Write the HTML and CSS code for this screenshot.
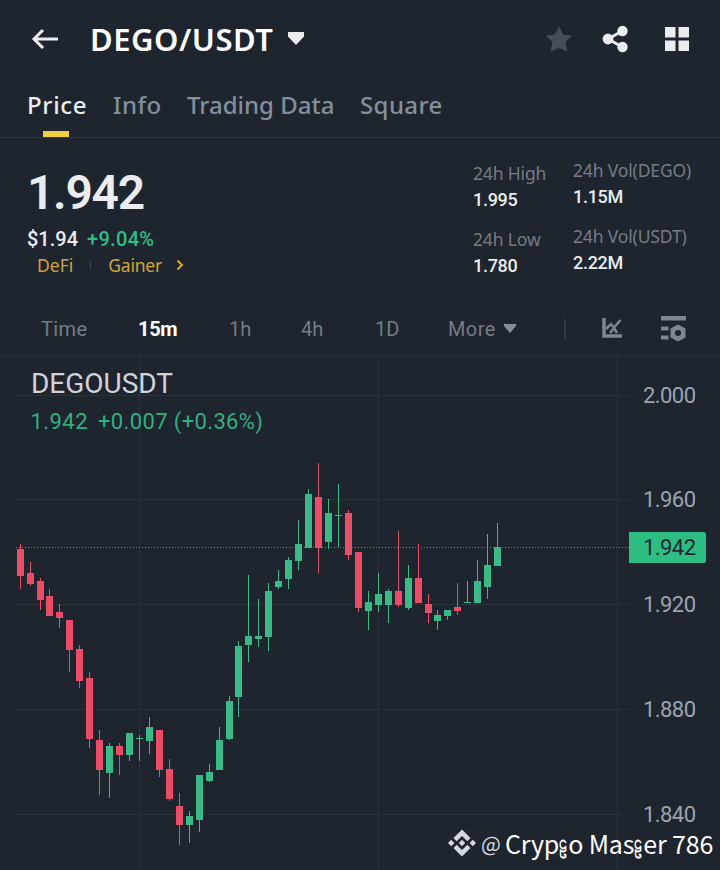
FILE: index.html
```html
<!doctype html>
<html lang="en">
<head>
<meta charset="utf-8">
<title>DEGO/USDT</title>
<link rel="stylesheet" href="styles.css">
</head>
<body>
	<header class="topbar">
		<svg class="back" width="28" height="22" viewBox="0 0 28 22"><path d="M27 11H3M12 2L3 11l9 9" fill="none" stroke="#eaecef" stroke-width="3"/></svg>
		<h1 class="pair">DEGO/USDT</h1>
		<svg class="pairArrow" width="16" height="13" viewBox="0 0 16 13"><path d="M0 0h16v4.500L8 13 0 4.500z" fill="#eaecef"/></svg>
		<div class="actions">
			<svg width="28" height="28" viewBox="0 0 28 28"><path d="M14 2l3.800 8 8.500 1-6.300 6 1.800 8.800-7.800-3.200-7.800 3.200L8 17l-6.300-6 8.500-1z" fill="#474d57" stroke="#474d57" stroke-linejoin="round"/></svg>
			<svg width="26" height="28" viewBox="0 0 26 28"><path d="M20.500 6L6 14l14.500 8" fill="none" stroke="#eaecef" stroke-width="3"/><g fill="#eaecef"><circle cx="20.500" cy="6" r="5.200"/><circle cx="6" cy="14" r="5.400"/><circle cx="20.500" cy="22" r="5.200"/></g></svg>
			<svg width="24" height="24" viewBox="0 0 24 24"><path d="M0 0h10.500v10.500H0zM13.500 0H24v10.500H13.500zM0 13.500h10.500V24H0zM13.500 13.500H24V24H13.500z" fill="#eaecef"/></svg>
		</div>
	</header>

	<nav class="tabs">
		<a class="tab active">Price</a>
		<a class="tab info">Info</a>
		<a class="tab trading">Trading Data</a>
		<a class="tab square">Square</a>
	</nav>

	<section class="summary">
		<div class="quote">
			<div class="last">1.942</div>
			<div class="change"><span class="usd">$1.94</span><span class="up">+9.04%</span></div>
			<div class="tags">
				<span>DeFi</span><i class="tagLine"></i><span class="gainer">Gainer</span>
				<svg width="8" height="12" viewBox="0 0 8 12"><path d="M1.500 1.500L6 6l-4.500 4.500" fill="none" stroke="#d9ab2c" stroke-width="2"/></svg>
			</div>
		</div>
		<dl class="stats range">
			<dt>24h High</dt><dd>1.995</dd>
			<dt>24h Low</dt><dd>1.780</dd>
		</dl>
		<dl class="stats volume">
			<dt>24h Vol(DEGO)</dt><dd>1.15M</dd>
			<dt>24h Vol(USDT)</dt><dd>2.22M</dd>
		</dl>
	</section>

	<div class="intervals">
		<span class="iTime">Time</span>
		<span class="i15 active">15m</span>
		<span class="i1h">1h</span>
		<span class="i4h">4h</span>
		<span class="i1d">1D</span>
		<span class="iMore">More</span>
		<svg class="moreArrow" width="12" height="9" viewBox="0 0 12 9"><path d="M0 0h12v2L6 9 0 2z" fill="#848e9c"/></svg>
		<i class="line"></i>
		<svg class="chartIcon" width="20" height="20" viewBox="0 0 20 20"><path d="M2 0v18h18" fill="none" stroke="#7f8591" stroke-width="3.500"/><path d="M4 11l5-5 3 3.500L18.500 2M8 15l4-5 3 5" fill="none" stroke="#7f8591" stroke-width="2.500"/></svg>
		<svg width="25" height="26" viewBox="0 0 25 26"><path d="M0 0h25v4.500H0zM0 10.500h7.500v4H0zM0 19.500h7.500v4H0z" fill="#7f8591"/><path fill-rule="evenodd" d="M17 8.500l7.500 4v9L17 25.500l-7.500-4v-9zM17 14a3 3 0 1 0 0 6 3 3 0 0 0 0-6z" fill="#7f8591"/></svg>
	</div>

	<main class="chart">
		<svg id="plot" width="720" height="516" viewBox="0 354 720 516">
			<g class="grid">
				<path d="M16 395.500H629M16 499.500H629M16 604.500H629M16 709.500H629M16 814.500H629"/>
				<path d="M139.500 354V870M378.500 354V870M617.500 354V870"/>
			</g>
			<text class="symbol" x="31" y="393" textLength="142">DEGOUSDT</text>
			<text class="ohlc" x="30.500" y="429" textLength="57">1.942</text>
			<text class="ohlc" x="98" y="429" textLength="165">+0.007 (+0.36%)</text>
			<g class="axis">
				<text x="643" y="403" textLength="53">2.000</text>
				<text x="643" y="507" textLength="53">1.960</text>
				<text x="643" y="612" textLength="53">1.920</text>
				<text x="643" y="717" textLength="53">1.880</text>
				<text x="643" y="822" textLength="53">1.840</text>
			</g>
			<path class="priceLine" d="M16 547.500H629"/>
			<g id="candles"></g>
			<path d="M629 532h74.500a2.500 2.500 0 0 1 2.500 2.500v26a2.500 2.500 0 0 1-2.500 2.500H629z" fill="#2ebd85"/>
			<text class="current" x="643" y="555" textLength="53">1.942</text>
		</svg>
		<div class="credit">
			<svg width="28" height="28" viewBox="0 0 28 28"><path d="M14 .5l8.500 8.500-3.200 3.200L14 6.900l-5.300 5.300L5.500 9zM14 27.500L5.500 19l3.200-3.200 5.300 5.300 5.300-5.300 3.200 3.200zM14 10.800l3.200 3.200-3.200 3.200-3.200-3.200zM3.200 10.800L6.400 14l-3.200 3.200L0 14zM24.800 10.800L28 14l-3.200 3.200-3.200-3.200z" fill="#d5d8df"/></svg>
			<span class="at">@</span>
			<span class="author">Cryp<b class="odd">ဠ</b>o Mas<b class="odd">ဠ</b>er 786</span>
		</div>
	</main>

<script src="chart.js"></script>
</body>
</html>
```
FILE: styles.css
```css
body {
  margin: 0;
  width: 720px;
  height: 870px;
  overflow: hidden;
  background-color: #1f252f;
  color: #eaecef;
  font-family: "Roboto", sans-serif;
}
svg {
  display: block;
  flex: none;
}
.topbar {
  display: flex;
  align-items: center;
  height: 77px;
  padding: 0 31px;
}
.pair {
  margin: 1px 0 0 31px;
  width: 183px;
  font-family: "Noto Sans", sans-serif;
  font-size: 31px;
  font-weight: 600;
  letter-spacing: 0.5px;
  line-height: 40px;
  color: #fff;
  white-space: nowrap;
}
.pairArrow {
  margin-left: 15px;
}
.actions {
  display: flex;
  align-items: center;
  margin-left: auto;
}
.actions svg + svg {
  margin-left: 29px;
}
.actions svg + svg + svg {
  margin-left: 37px;
}

.tabs {
  display: flex;
  box-sizing: border-box;
  height: 61px;
  padding: 13px 0 0 27px;
  border-bottom: 1px solid #303640;
  font-family: "Noto Sans", sans-serif;
  font-size: 24px;
  font-weight: 500;
  line-height: 30px;
  white-space: nowrap;
  color: #848e9c;
}
.tab {
  position: relative;
  width: 60px;
}
.tab.active {
  color: #eaecef;
  letter-spacing: 0.7px;
}
.tab.active::after {
  content: "";
  position: absolute;
  left: 16px;
  top: 41px;
  width: 26px;
  height: 6px;
  background-color: #f0d13c;
}
.info {
  margin-left: 26px;
  width: 48px;
  letter-spacing: 0.5px;
}
.trading {
  margin-left: 26px;
  width: 147px;
}
.square {
  margin-left: 26px;
  letter-spacing: 0.4px;
}

.summary {
  display: flex;
  height: 162px;
  white-space: nowrap;
}
.quote {
  width: 446px;
  padding-left: 27px;
}
.last {
  margin-top: 27px;
  font-size: 48px;
  font-weight: 600;
  letter-spacing: -1.3px;
  line-height: 56px;
}
.change {
  display: flex;
  gap: 9px;
  margin-top: 6px;
  font-size: 20px;
  font-weight: 500;
  line-height: 24px;
}
.up {
  color: #2ebd85;
  letter-spacing: 0.3px;
}
.tags {
  display: flex;
  align-items: center;
  margin-top: 2px;
  padding-left: 10px;
  font-family: "Noto Sans", sans-serif;
  font-size: 17.5px;
  line-height: 24px;
  color: #d0a63a;
}
.tagLine {
  width: 1px;
  height: 8px;
  margin: 0 17px;
  background-color: #414854;
}
.gainer {
  margin-right: 14px;
  letter-spacing: -0.2px;
}
.stats {
  margin: 22px 0 0;
  width: 100px;
  font-size: 18px;
  line-height: 26px;
}
.volume {
  margin-top: 19px;
}
.stats dt {
  font-family: "Noto Sans", sans-serif;
  font-size: 17.5px;
  letter-spacing: -0.15px;
  color: #747b87;
}
.stats dd {
  margin: 1px 0 13px;
  font-weight: 500;
  letter-spacing: -0.3px;
}

.intervals {
  display: flex;
  align-items: center;
  box-sizing: border-box;
  height: 57px;
  padding: 3px 0 0 41px;
  border-bottom: 3px solid #252b35;
  font-size: 20px;
  color: #747b87;
}
.intervals span {
  flex: none;
}
.intervals .active {
  color: #fff;
  font-weight: 700;
  letter-spacing: -0.3px;
}
.intervals .iTime {
  width: 97px;
  letter-spacing: 0.4px;
}
.i15 {
  width: 91px;
}
.i1h {
  width: 72px;
}
.i4h {
  width: 74px;
}
.i1d {
  width: 73px;
}
.intervals .iMore {
  width: 56px;
  letter-spacing: 0.4px;
}
.line {
  width: 2px;
  height: 20px;
  margin: 0 36px 0 48px;
  background-color: #353c47;
}
.chartIcon {
  margin: 0 39px 2px 0;
}

.chart {
  position: relative;
  height: 513px;
}
#plot {
  margin-top: -3px;
}
.grid {
  stroke: #2b313b;
}
.symbol {
  font-size: 28px;
  fill: #d0d3da;
}
.ohlc {
  font-size: 22px;
  fill: #37ae80;
}
.axis {
  font-size: 22px;
  fill: #9da2ae;
}
.current {
  font-size: 22px;
  fill: #1b2a30;
}
.priceLine {
  stroke: #419b80;
  stroke-dasharray: 1 2;
}
.rise {
  fill: #3bb987;
}
.fall {
  fill: #eb4d66;
}

.credit {
  position: absolute;
  left: 448px;
  bottom: 10px;
  display: flex;
  align-items: center;
  height: 28px;
  white-space: nowrap;
  font-family: "Noto Sans CJK SC", sans-serif;
  font-size: 25px;
  line-height: 28px;
}
.at {
  margin-left: 5px;
  font-size: 21px;
  line-height: 26px;
  color: #d5d8df;
}
.author {
  color: #fff;
  margin-left: 4px;
  letter-spacing: -0.15px;
  line-height: 26px;
}
.odd {
  display: inline-block;
  width: 9px;
  height: 14px;
  font-size: 14px;
  line-height: 14px;
  transform: translateY(-7px) scaleY(1.35);
}
```
FILE: chart.js
```js
// left, high, body top, body bottom, low, 1 = rise
var candles = [
	[17, 544, 549, 576, 589, 0], [27, 562, 573, 584, 586, 0], [37, 578, 581, 600, 610, 0],
	[46, 589, 596, 616, 616, 0], [56, 604, 612, 618, 628, 0], [66, 620, 620, 650, 672, 0],
	[76, 645, 649, 681, 688, 0], [86, 672, 678, 739, 748, 0], [96, 730, 740, 770, 795, 0],
	[106, 743, 746, 773, 798, 1], [116, 743, 746, 755, 775, 0], [126, 733, 733, 755, 761, 1],
	[136, 735, 738, 739, 761, 1], [146, 717, 727, 741, 754, 1], [156, 730, 730, 770, 777, 0],
	[166, 759, 769, 799, 801, 0], [176, 793, 806, 825, 845, 0], [186, 811, 816, 825, 843, 1],
	[196, 775, 775, 820, 832, 1], [206, 764, 772, 781, 782, 1], [216, 727, 740, 770, 770, 1],
	[226, 696, 701, 739, 740, 1], [235, 641, 646, 697, 717, 1], [245, 575, 636, 645, 662, 1],
	[255, 599, 636, 639, 647, 1], [265, 583, 591, 637, 651, 1], [275, 570, 581, 587, 589, 1],
	[285, 557, 560, 579, 589, 1], [295, 520, 544, 561, 570, 1], [305, 489, 494, 548, 548, 1],
	[315, 463, 497, 548, 573, 0], [325, 499, 513, 542, 549, 1], [335, 484, 515, 516, 547, 1],
	[345, 510, 513, 555, 560, 0], [355, 552, 552, 608, 612, 0], [365, 591, 602, 611, 630, 1],
	[375, 573, 594, 605, 612, 1], [385, 589, 591, 605, 623, 1], [395, 531, 591, 605, 607, 0],
	[405, 565, 578, 608, 610, 1], [415, 544, 578, 603, 603, 0], [425, 594, 604, 613, 623, 0],
	[434, 610, 615, 621, 630, 1], [444, 610, 610, 616, 620, 1], [454, 583, 607, 611, 615, 0],
	[464, 581, 602, 603, 603, 1], [474, 560, 581, 603, 603, 1], [484, 534, 565, 587, 599, 1],
	[494, 523, 547, 566, 566, 1]
];

function addRect(x, y, w, h, name) {
	var r = document.createElementNS("http://www.w3.org/2000/svg", "rect");
	r.setAttribute("x", x);
	r.setAttribute("y", y);
	r.setAttribute("width", w);
	r.setAttribute("height", h);
	r.setAttribute("class", name);
	document.getElementById("candles").appendChild(r);
}

for (var i = 0; i < candles.length; i++) {
	var c = candles[i];
	var name = c[5] ? "rise" : "fall";
	addRect(c[0] + 3, c[1], 1, c[4] - c[1], name);
	addRect(c[0], c[2], 7, c[3] - c[2], name);
}
```
